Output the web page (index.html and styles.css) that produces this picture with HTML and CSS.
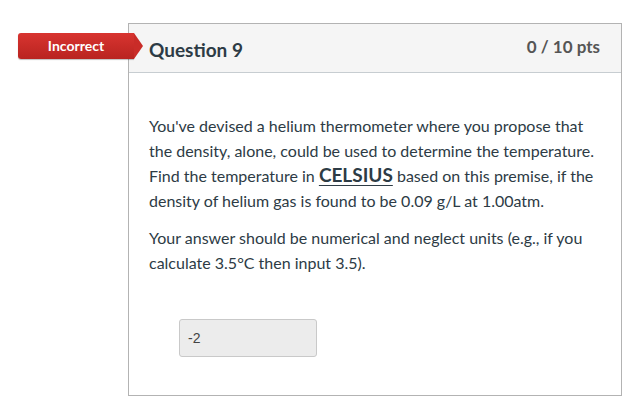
FILE: index.html
```html
<!DOCTYPE html>
<html>
<head>
<meta charset="utf-8">
<link rel="stylesheet" href="styles.css">
</head>
<body>
<div class="page">
  <div class="card">
    <div class="badge">Incorrect</div>
    <div class="card-header">
      <span class="q-title">Question 9</span>
      <span class="q-pts">0 / 10 pts</span>
    </div>
    <div class="card-body">
      <p>You've devised a helium thermometer where you propose that the density, alone, could be used to determine the temperature. Find the temperature in <strong class="emph">CELSIUS</strong> based on this premise, if the density of helium gas is found to be 0.09 g/L at 1.00atm.</p>
      <p>Your answer should be numerical and neglect units (e.g., if you calculate 3.5°C then input 3.5).</p>
      <div class="answer">-2</div>
    </div>
  </div>
</div>
</body>
</html>
```
FILE: styles.css
```css
html, body {
  margin: 0;
  padding: 0;
  background: #ffffff;
}
.page {
  padding: 23px 0 0 128px;
}
.card {
  position: relative;
  width: 492px;
  height: 371px;
  border: 1px solid #b3b3b3;
  font-family: Lato, "Open Sans", sans-serif;
  color: #2d3b45;
}
.card-header {
  display: flex;
  justify-content: space-between;
  align-items: center;
  height: 48px;
  padding: 0 21px 0 20px;
  background: #f5f5f5;
  border-bottom: 1px solid #c7cdd1;
}
.q-title {
  font-weight: 700;
  font-size: 19px;
  margin-top: 2px;
}
.q-pts {
  font-weight: 700;
  font-size: 17px;
  color: #555555;
  margin-top: -4px;
}
.card-body {
  padding: 40px 20px 0 20px;
  font-size: 16px;
  line-height: 25px;
}
.card-body p {
  margin: 0 0 12px 0;
}
.emph {
  font-size: 19px;
  line-height: 1;
  text-decoration: underline;
  text-decoration-thickness: 1px;
  text-underline-offset: 3px;
}
.answer {
  margin: 44px 0 0 30px;
  width: 128px;
  height: 36px;
  padding: 0 0 0 8px;
  background: #ececec;
  border: 1px solid #c9c9c9;
  border-radius: 3px;
  font-family: "Liberation Sans", Arial, sans-serif;
  font-size: 14px;
  line-height: 36px;
  color: #444;
}
.badge {
  position: absolute;
  left: -111px;
  top: 9px;
  width: 116px;
  height: 26px;
  box-sizing: border-box;
  background: linear-gradient(#d83430, #b92420);
  border-radius: 3px 0 0 3px;
  color: #ffffff;
  font-weight: 700;
  font-size: 14px;
  line-height: 25px;
  text-align: center;
  box-shadow: 0 1px 1px rgba(0,0,0,0.25);
}
.badge::after {
  content: "";
  position: absolute;
  right: -9px;
  top: 0;
  width: 0;
  height: 0;
  border-top: 13px solid transparent;
  border-bottom: 13px solid transparent;
  border-left: 9px solid #c92c28;
}
```
